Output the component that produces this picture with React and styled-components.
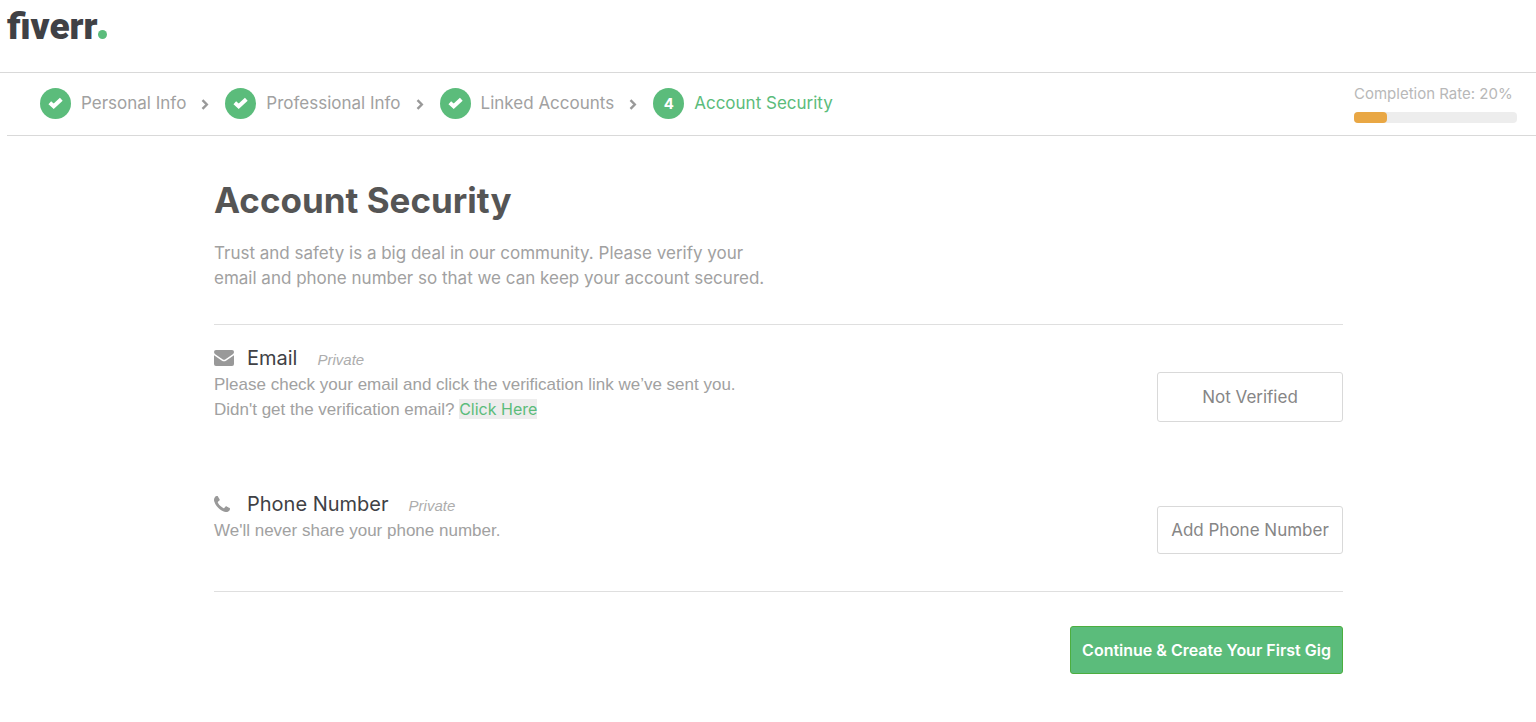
import React from "react";
import styled, { createGlobalStyle } from "styled-components";

const GlobalStyle = createGlobalStyle`
  *, *::before, *::after { box-sizing: border-box; }
  body {
    margin: 0;
    background: #fff;
    color: #a1a1a1;
    font-family: Inter, "Liberation Sans", sans-serif;
    font-size: 17px;
    line-height: 25px;
  }
  h1, h2, p, ol { margin: 0; padding: 0; }
`;

const Header = styled.header`
  height: 73px;
  padding: 5px 7px 0;
  border-bottom: 1px solid #d9d9d9;
`;

const Logo = styled.a`
  display: inline-flex;
  align-items: baseline;
  color: #404145;
  font: 900 37px/44px Roboto, sans-serif;
  text-decoration: none;
`;

const LogoDot = styled.span`
  width: 9px;
  height: 9px;
  border-radius: 50%;
  background: #5bbc7b;
`;

const ProgressBar = styled.nav`
  display: flex;
  justify-content: space-between;
  align-items: center;
  height: 63px;
  margin-left: 7px;
  padding: 0 19px 2px 33px;
  border-bottom: 1px solid #d9d9d9;
`;

const Steps = styled.ol`
  display: flex;
  align-items: center;
  gap: 16px;
  list-style: none;
`;

const Step = styled.li`
  display: flex;
  align-items: center;
  gap: 10px;
  color: ${(p) => (p.$current ? "#5bbc7b" : "#a1a1a1")};
  white-space: nowrap;
`;

const StepBadge = styled.span`
  display: flex;
  align-items: center;
  justify-content: center;
  width: 31px;
  height: 31px;
  border-radius: 50%;
  background: #5bbc7b;
  color: #fff;
  font-size: 15px;
  font-weight: 700;
`;

const ChevronBox = styled.span`
  display: flex;
  margin: 2px 0 0 5px;
`;

const Completion = styled.div`
  display: flex;
  flex-direction: column;
  gap: 8px;
  width: 163px;
`;

const CompletionLabel = styled.span`
  color: #b8b8b8;
  font-size: 15px;
  line-height: 20px;
  white-space: nowrap;
`;

const Track = styled.div`
  height: 11px;
  border-radius: 4px;
  background: #ededed;
`;

const Fill = styled.div`
  height: 100%;
  border-radius: 4px;
  background: #e9a744;
`;

const Main = styled.main`
  padding: 40px 193px 48px 214px;
`;

const Title = styled.h1`
  color: #555;
  font-size: 35px;
  font-weight: 700;
  line-height: 48px;
`;

const Intro = styled.p`
  margin-top: 17px;
  max-width: 580px;
`;

const Methods = styled.div`
  margin-top: 33px;
  border-top: 1px solid #dfdfdf;
  border-bottom: 1px solid #dfdfdf;
`;

const Method = styled.section`
  display: flex;
  justify-content: space-between;
  align-items: flex-start;
  padding: ${(p) => (p.$last ? "0 0 37px" : "18px 0 67px")};
`;

const MethodHeading = styled.div`
  display: flex;
  align-items: center;
  height: 29px;
`;

const IconSlot = styled.span`
  display: flex;
  width: 33px;
`;

const MethodTitle = styled.h2`
  color: #404145;
  font-size: 20px;
  font-weight: 400;
  line-height: 28px;
`;

const Privacy = styled.em`
  margin: 4px 0 0 20px;
  color: #adadad;
  font: italic 15px/20px "Liberation Sans", Arial, sans-serif;
`;

const Detail = styled.p`
  font: 17px/25px "Liberation Sans", Arial, sans-serif;
`;

const ResendLink = styled.a`
  background: #ededed;
  color: #5bbc7b;
  font-family: Inter, sans-serif;
  font-size: 16px;
  line-height: 20px;
  text-decoration: none;
`;

const ActionButton = styled.button`
  width: 186px;
  height: ${(p) => (p.$tall ? "50px" : "48px")};
  margin-top: ${(p) => (p.$tall ? "29px" : "17px")};
  padding: 0;
  border: 1px solid #d9d9d9;
  border-radius: 3px;
  background: #fff;
  color: #868686;
  font: 17px/25px Inter, sans-serif;
  cursor: pointer;
`;

const Footer = styled.div`
  display: flex;
  justify-content: flex-end;
  padding-top: 34px;
`;

const ContinueButton = styled.button`
  width: 273px;
  height: 48px;
  padding: 0;
  border: 1px solid #4cae3f;
  border-radius: 3px;
  background: #5bbc7b;
  color: #fff;
  font: 600 16px/24px Inter, sans-serif;
  white-space: nowrap;
  cursor: pointer;
`;

const Check = () => (
  <svg width="15" height="12" viewBox="0 0 15 12" aria-hidden="true">
    <path d="M1.800 5.800 5.700 9.300 13.300 2.200" fill="none" stroke="#fff" strokeWidth="4" />
  </svg>
);

const Chevron = () => (
  <svg width="8" height="11" viewBox="0 0 8 11" aria-hidden="true">
    <path d="M1.5 1.2 5.8 5.5 1.5 9.8" fill="none" stroke="#999" strokeWidth="2.4" />
  </svg>
);

const Envelope = () => (
  <svg width="20" height="16" viewBox="0 0 20 16" fill="#999" aria-hidden="true">
    <path d="M2 0h16a2 2 0 0 1 2 2c0 .8-.5 1.600-1.200 2.200L11.500 9.300c-1 .7-2 .7-3 0L1.200 4.200C.5 3.600 0 2.800 0 2a2 2 0 0 1 2-2Z" />
    <path d="M0 5.200 8 10.700c1.300.8 2.700.8 4 0L20 5.200V14a2 2 0 0 1-2 2H2a2 2 0 0 1-2-2Z" />
  </svg>
);

const Phone = () => (
  <svg width="16" height="16" viewBox="0 0 1408 1408" fill="#999" aria-hidden="true">
    <path d="M1408 1112q0 27-10 70.500t-21 68.500q-21 50-122 106-94 51-186 51-27 0-53-3.500t-57.500-12.500-47-14.500-55.500-20.500-49-18q-98-35-175-83-127-79-264-216t-216-264q-48-77-83-175-3-9-18-49t-20.500-55.500-14.500-47-12.500-57.500-3.500-53q0-92 51-186 56-101 106-122 25-11 68.500-21t70.500-10q14 0 21 3 18 6 53 76 11 19 30 54t35 63.500 31 53.500q3 4 17.500 25t21.500 35.500 7 28.500q0 20-28.500 50t-62 55-62 53-28.500 46q0 9 5 22.500t8.500 20.500 14 24 11.500 19q76 137 174 235t235 174q2 1 19 11.500t24 14 20.500 8.500 22.500 5q18 0 46-28.500t53-62 55-62 50-28.500q14 0 28.500 7t35.500 21.500 25 17.500q25 15 53.500 31t63.500 35 54 30q70 35 76 53 3 7 3 21z" />
  </svg>
);

const STEPS = ["Personal Info", "Professional Info", "Linked Accounts", "Account Security"];
const COMPLETION = 20;

export default function App() {
  const current = STEPS.length - 1;
  return (
    <>
      <GlobalStyle />
      <Header>
        <Logo href="#">
          fiverr
          <LogoDot />
        </Logo>
      </Header>
      <ProgressBar aria-label="Profile steps">
        <Steps>
          {STEPS.map((label, i) => (
            <Step key={label} $current={i === current}>
              <StepBadge>{i < current ? <Check /> : i + 1}</StepBadge>
              {label}
              {i < current && (
                <ChevronBox>
                  <Chevron />
                </ChevronBox>
              )}
            </Step>
          ))}
        </Steps>
        <Completion>
          <CompletionLabel>Completion Rate: {COMPLETION}%</CompletionLabel>
          <Track>
            <Fill style={{ width: `${COMPLETION}%` }} />
          </Track>
        </Completion>
      </ProgressBar>
      <Main>
        <Title>Account Security</Title>
        <Intro>
          Trust and safety is a big deal in our community. Please verify your
          <br />
          email and phone number so that we can keep your account secured.
        </Intro>
        <Methods>
          <Method>
            <div>
              <MethodHeading>
                <IconSlot>
                  <Envelope />
                </IconSlot>
                <MethodTitle>Email</MethodTitle>
                <Privacy>Private</Privacy>
              </MethodHeading>
              <Detail>
                Please check your email and click the verification link we’ve sent you.
                <br />
                Didn't get the verification email? <ResendLink href="#">Click Here</ResendLink>
              </Detail>
            </div>
            <ActionButton type="button" $tall>
              Not Verified
            </ActionButton>
          </Method>
          <Method $last>
            <div>
              <MethodHeading>
                <IconSlot>
                  <Phone />
                </IconSlot>
                <MethodTitle>Phone Number</MethodTitle>
                <Privacy>Private</Privacy>
              </MethodHeading>
              <Detail>We'll never share your phone number.</Detail>
            </div>
            <ActionButton type="button">Add Phone Number</ActionButton>
          </Method>
        </Methods>
        <Footer>
          <ContinueButton type="button">Continue &amp; Create Your First Gig</ContinueButton>
        </Footer>
      </Main>
    </>
  );
}
